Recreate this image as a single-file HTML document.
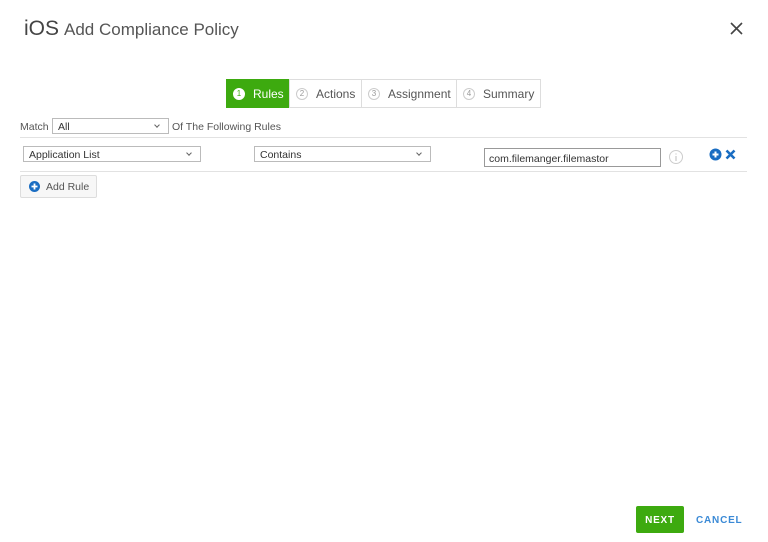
<!DOCTYPE html>
<html><head><style>
*{box-sizing:border-box;margin:0;padding:0}
body{width:768px;height:542px;background:#fff;font-family:"Liberation Sans",sans-serif;color:#555;position:relative;overflow:hidden;font-size:11px}
.a{position:absolute}
.sel{position:absolute;border:1px solid #bbb;background:#fff;height:16px;font-size:10.5px;color:#333;padding:2px 5px 0;line-height:13px}
.sel:after{content:"";position:absolute;right:9px;top:4px;width:3px;height:3px;border-right:1px solid #666;border-bottom:1px solid #666;transform:rotate(45deg)}
.step{position:absolute;top:79px;height:29px;border:1px solid #ddd;font-size:12px;line-height:29px;color:#555}
.num{display:inline-block;width:12px;height:12px;border:1px solid #ccc;border-radius:50%;font-size:8px;line-height:10px;text-align:center;color:#999;vertical-align:middle;margin:-2px 8px 0 6px}
</style></head><body>
<div class="a" style="left:24px;top:17px;font-size:21px;color:#444">iOS</div>
<div class="a" style="left:64px;top:20px;font-size:17px;color:#555">Add Compliance Policy</div>
<svg class="a" style="left:730px;top:22px" width="13" height="13"><path d="M1 1L12 12M12 1L1 12" stroke="#444" stroke-width="1.6"/></svg>

<div class="step" style="left:226px;width:64px;background:#3daa0f;border-color:#3daa0f;color:#fff"><span class="num" style="background:#fff;border-color:#fff;color:#3daa0f">1</span>Rules</div>
<div class="step" style="left:289px;width:73px"><span class="num">2</span>Actions</div>
<div class="step" style="left:361px;width:96px"><span class="num">3</span>Assignment</div>
<div class="step" style="left:456px;width:85px"><span class="num">4</span>Summary</div>

<div class="a" style="left:20px;top:121px;font-size:10.5px">Match</div>
<div class="sel" style="left:52px;top:118px;width:117px">All</div>
<div class="a" style="left:172px;top:121px;font-size:10.5px">Of The Following Rules</div>
<div class="a" style="left:20px;top:137px;width:727px;height:1px;background:#e2e2e2"></div>
<div class="sel" style="left:23px;top:146px;width:178px">Application List</div>
<div class="sel" style="left:254px;top:146px;width:177px">Contains</div>
<div class="a" style="left:484px;top:148px;width:177px;height:19px;border:1px solid #999;font-size:10.5px;color:#333;padding:4px 4px 0;line-height:12px">com.filemanger.filemastor</div>
<svg class="a" style="left:668px;top:149px" width="16" height="16"><circle cx="8" cy="8" r="6.5" fill="none" stroke="#ccc"/><path d="M8 7v5M8 4.5v1" stroke="#ccc" stroke-width="1.3"/></svg>
<svg class="a" style="left:709px;top:148px" width="13" height="13"><circle cx="6.5" cy="6.5" r="6" fill="#1a6dc2"/><path d="M6.5 3.5v6M3.5 6.5h6" stroke="#fff" stroke-width="2"/></svg>
<svg class="a" style="left:725px;top:149px" width="11" height="11"><path d="M1.5 1.5L9.5 9.5M9.5 1.5L1.5 9.5" stroke="#1a6dc2" stroke-width="2.6"/></svg>
<div class="a" style="left:20px;top:171px;width:727px;height:1px;background:#e2e2e2"></div>
<div class="a" style="left:20px;top:175px;width:77px;height:23px;border:1px solid #ddd;border-radius:2px;background:#f7f7f7;font-size:10.5px;line-height:23px;padding-left:25px;color:#555">Add Rule</div>
<svg class="a" style="left:29px;top:181px" width="11" height="11"><circle cx="5.5" cy="5.5" r="5.5" fill="#1a6dc2"/><path d="M5.5 2.5v6M2.5 5.5h6" stroke="#fff" stroke-width="1.8"/></svg>

<div class="a" style="left:636px;top:506px;width:48px;height:27px;background:#3daa0f;border-radius:2px;color:#fff;font-size:10px;font-weight:bold;text-align:center;line-height:29px;letter-spacing:.8px">NEXT</div>
<div class="a" style="left:696px;top:515px;color:#3b8ad6;font-size:10px;font-weight:bold;letter-spacing:.8px">CANCEL</div>
</body></html>
